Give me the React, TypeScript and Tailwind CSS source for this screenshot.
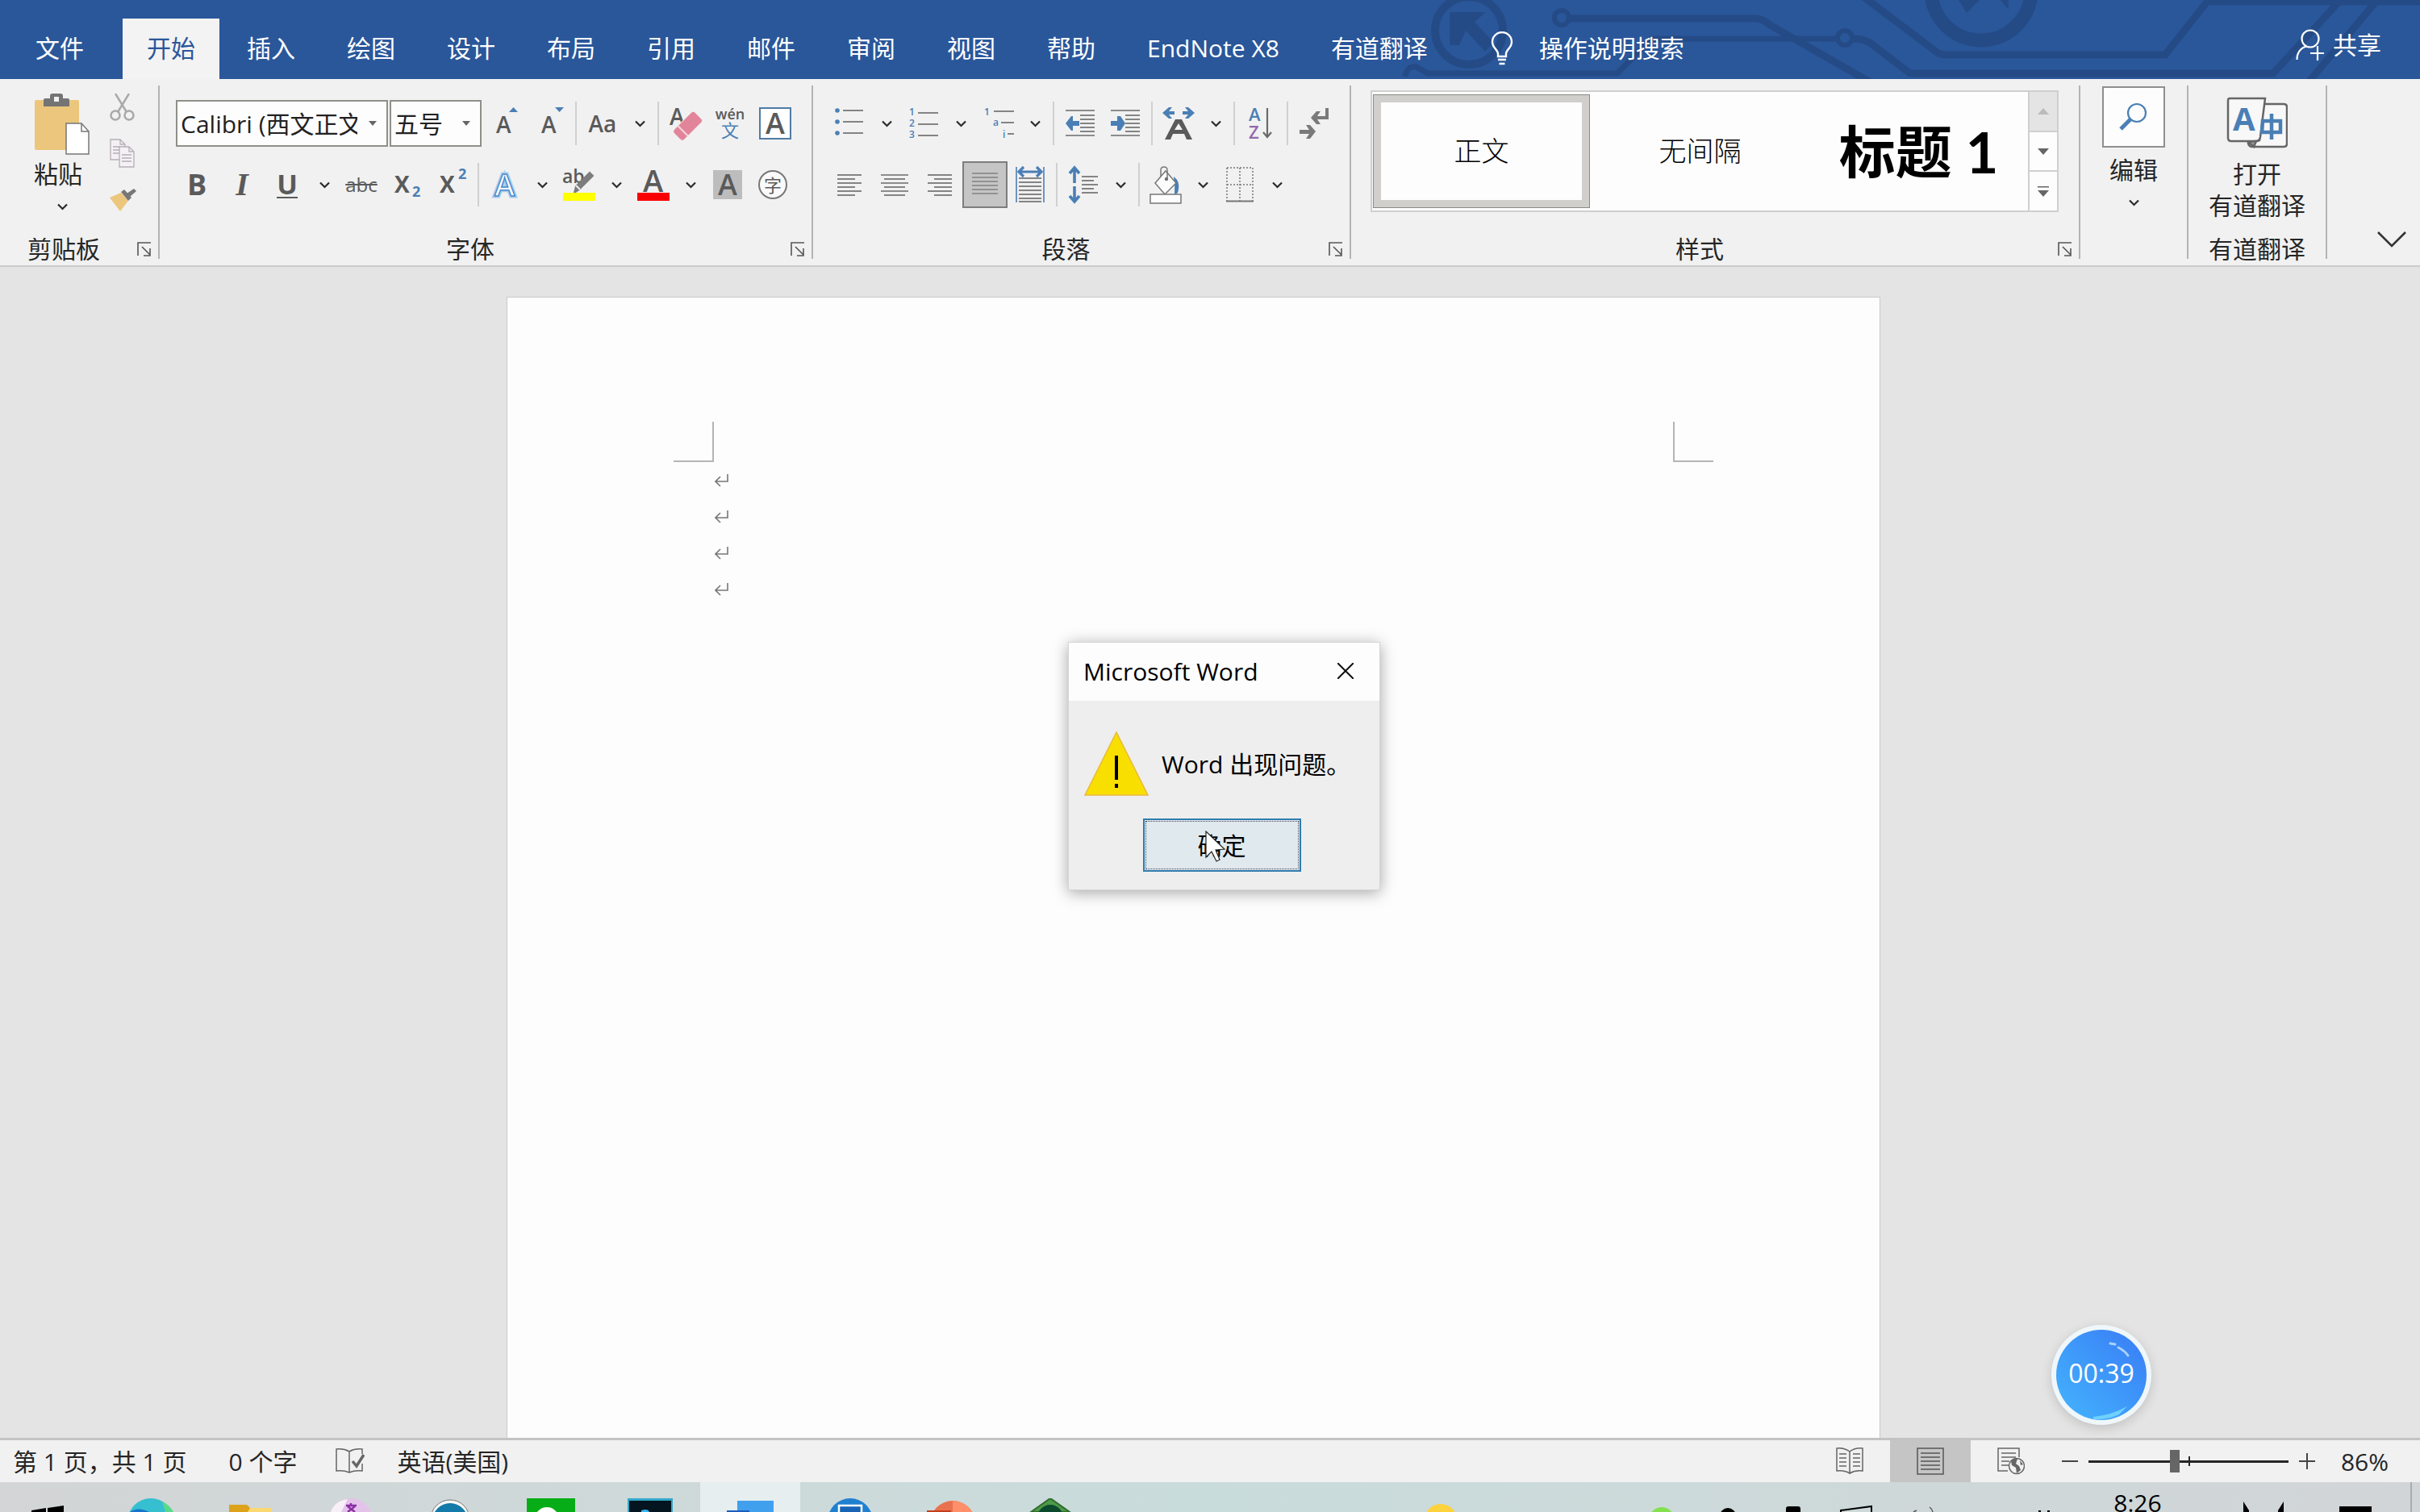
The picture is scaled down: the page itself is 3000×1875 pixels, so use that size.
import React from 'react';
import clsx from 'clsx';

const tabs = ['插入', '绘图', '设计', '布局', '引用', '邮件', '审阅', '视图', '帮助', 'EndNote X8', '有道翻译'];

/* ---------- small building blocks ---------- */

function Tool({ label, children, active }: { label: string; children: React.ReactNode; active?: boolean }) {
  return (
    <button
      aria-label={label}
      className={clsx(
        'flex h-[58px] w-14 shrink-0 items-center justify-center text-[#5a5a5a] [&_svg]:overflow-visible',
        active && 'border-2 border-[#7d7d7d] bg-[#c5c5c5]'
      )}
    >
      {children}
    </button>
  );
}

function Chevron() {
  return (
    <svg width="13" height="9" viewBox="0 0 13 9" fill="none" stroke="#2b2b2b" strokeWidth="2.2">
      <path d="M1 1.5 6.5 7 12 1.5" />
    </svg>
  );
}

function More({ label }: { label: string }) {
  return (
    <button aria-label={label} className="flex h-[58px] w-9 shrink-0 items-center justify-center">
      <Chevron />
    </button>
  );
}

function Sep() {
  return <div className="mx-1 h-[54px] w-0.5 shrink-0 bg-[#d0d0d0]" />;
}

function Launcher({ label }: { label: string }) {
  return (
    <button aria-label={label} className="mr-2 ml-3 shrink-0">
      <svg width="18" height="18" viewBox="0 0 18 18" fill="none" stroke="#555" strokeWidth="1.6">
        <path d="M1 17V1h16M6 6l10 10M16 8v9H8" />
      </svg>
    </button>
  );
}

function Group({ title, className, children, launcher = true }: { title?: string; className?: string; children: React.ReactNode; launcher?: boolean }) {
  return (
    <section className={clsx('flex flex-col justify-between border-r-2 border-[#b4b4b4]', className)}>
      {children}
      {title && (
        <div className="flex h-6 items-center">
          <h2 className="flex-1 text-center leading-6 whitespace-nowrap">{title}</h2>
          {launcher && <Launcher label={title} />}
        </div>
      )}
    </section>
  );
}

function Combo({ label, value, className }: { label: string; value: string; className: string }) {
  return (
    <div className={clsx('relative', className)}>
      <select
        aria-label={label}
        className="h-[58px] w-full appearance-none overflow-hidden border-2 border-[#8f8f8a] bg-[#fdfdfd] pr-9 pl-1 text-[#222]"
      >
        <option>{value}</option>
      </select>
      <svg className="pointer-events-none absolute top-[26px] right-3.5" width="10" height="6" viewBox="0 0 10 6">
        <path d="M0 0h10L5 6z" fill="#666" />
      </svg>
    </div>
  );
}

/* Horizontal text lines, each one [x1, x2, y] */
function Lines({ rows, stroke = '#6a6a6a' }: { rows: number[][]; stroke?: string }) {
  return (
    <>
      {rows.map(([a, b, y]) => (
        <path key={y} d={`M${a} ${y}H${b}`} stroke={stroke} strokeWidth="1.6" />
      ))}
    </>
  );
}

/* ---------- title bar ---------- */

function Circuit() {
  return (
    <svg className="absolute top-0 right-0" width="1300" height="98" viewBox="1700 0 1300 98" fill="none" stroke="#254b86" strokeWidth="9">
      <circle cx="1821" cy="38" r="42" strokeWidth="10" />
      <path d="M1797 15h45l-14 12 24 26-11 11-24-26-8 18h-12z" fill="#254b86" stroke="none" />
      <circle cx="1936" cy="22" r="9" strokeWidth="6" />
      <path d="M1946 23h230q10 0 18 8l130 74" />
      <path d="M1742 95q2-14 14-12l14 8h235l42-43h230" strokeWidth="7" />
      <circle cx="2287" cy="47" r="9" strokeWidth="6" />
      <path d="M2296 48q18 0 26 8l46 35h450l88-96" />
      <path d="M2310-4l90 68q4 4 14 4h270l52-66h270" />
      <path d="M2952-6l-92 110" />
      <circle cx="2456" cy="-12" r="62" strokeWidth="17" />
      <path d="M2424-6l14 22 22-22zM2474-6l16 18V-6z" fill="#254b86" stroke="none" />
    </svg>
  );
}

function TitleBar() {
  return (
    <header className="relative flex h-[98px] items-end bg-[#2a579a] text-white">
      <Circuit />
      <nav className="relative flex flex-1 items-end gap-1 whitespace-nowrap">
        <button className="h-[75px] px-11 pb-0.5">文件</button>
        <button className="h-[75px] bg-[#f3f3f3] px-[30px] pb-0.5 text-[#2a579a]">开始</button>
        {tabs.map((t) => (
          <button key={t} className="h-[75px] px-[30px] pb-0.5">
            {t}
          </button>
        ))}
        <button className="flex h-[75px] items-center gap-8 pb-0.5 pl-11">
          <svg width="28" height="42" viewBox="0 0 28 42" fill="none" stroke="#fff" strokeWidth="2.4">
            <path d="M9 31v-4C8 22 2 20 2 13a12 12 0 0 1 24 0c0 7-6 9-7 14v4zM9 35h10M10.500 40h7" />
          </svg>
          操作说明搜索
        </button>
      </nav>
      <button className="relative mr-12 flex h-[83px] items-center gap-2.5 pb-0.5">
        <svg width="36" height="40" viewBox="0 0 36 40" fill="none" stroke="#fff" strokeWidth="2.2">
          <circle cx="18" cy="12" r="10.500" />
          <path d="M1.500 38c0-9 5-15 12-16.500M18 30h17M27 21v18" />
        </svg>
        共享
      </button>
    </header>
  );
}

/* ---------- ribbon groups ---------- */

function Clipboard() {
  return (
    <Group title="剪贴板" className="w-[198px]">
      <div className="flex pt-2.5 pl-[42px]">
        <button className="flex w-[70px] flex-col items-center">
          <svg width="68" height="76" viewBox="0 0 68 76">
            <rect x="0" y="8" width="55" height="62" rx="2" fill="#ebc67c" />
            <path d="M11 16V8q0-2 2-2h6V3q0-3 3-3h10q3 0 3 3v3h6q2 0 2 2v8z" fill="#747474" />
            <rect x="24" y="4" width="6" height="6" fill="#f1f1f1" />
            <path d="M39 37h19l9 10v28H39z" fill="#fff" stroke="#777" strokeWidth="1.500" />
            <path d="M58 37v10h9" fill="none" stroke="#777" strokeWidth="1.500" />
          </svg>
          <span className="mt-2 mb-5 w-[70px] text-left leading-8">粘贴</span>
          <Chevron />
        </button>
        <div className="ml-6 flex flex-col gap-[22px]">
          <button aria-label="剪切">
            <svg width="31" height="34" viewBox="0 0 31 34" fill="none" stroke="#a9a9a9" strokeWidth="2.500">
              <path d="M7 0l14 23M24 0L10 23" />
              <circle cx="7" cy="27" r="5.500" />
              <circle cx="24" cy="27" r="5.500" />
            </svg>
          </button>
          <button aria-label="复制">
            <svg width="31" height="36" viewBox="0 0 31 36" fill="#f3f1f3" stroke="#b7aeb7" strokeWidth="1.300">
              <path d="M1 1h12l6 6v19H1zM13 1v6h6" />
              <path d="M4 10h9M4 14h9M4 18h9" />
              <path d="M12 10h12l6 6v19H12zM24 10v6h6M15 20h12M15 24h12M15 28h12" />
            </svg>
          </button>
          <button aria-label="格式刷" className="mt-1">
            <svg width="33" height="28" viewBox="0 0 33 28">
              <path d="M0 11l14-6 9 10-10 13z" fill="#ebc67c" />
              <path d="M14 4l4-3 9 10-4 4z" fill="#777" />
              <path d="M21 6l9-6 3 3-8 7z" fill="#777" />
            </svg>
          </button>
        </div>
      </div>
    </Group>
  );
}

function FontGroup() {
  return (
    <Group title="字体" className="w-[810px]">
      <div className="flex flex-col gap-[18px] pt-[18px] pl-[18px]">
        <div className="flex items-center">
          <Combo label="字体" value="Calibri (西文正文)" className="mx-0.5 w-[263px]" />
          <Combo label="字号" value="五号" className="w-[114px]" />
          <Tool label="增大字号">
            <svg width="36" height="40" viewBox="-5 0 36 40" fill="#5a5a5a">
              <text x="3" y="32" className="font-['Open_Sans'] text-[28px] font-semibold">A</text>
              <path d="M19 6h11l-5.500-6z" fill="#4a7fb5" />
            </svg>
          </Tool>
          <Tool label="减小字号">
            <svg width="36" height="40" viewBox="-5 0 36 40" fill="#5a5a5a">
              <text x="3" y="32" className="font-['Open_Sans'] text-[28px] font-semibold">A</text>
              <path d="M20 0h11l-5.500 6z" fill="#4a7fb5" />
            </svg>
          </Tool>
          <Sep />
          <Tool label="更改大小写">
            <span className="text-[28px] font-semibold">Aa</span>
          </Tool>
          <More label="大小写选项" />
          <Sep />
          <Tool label="清除格式">
            <svg width="40" height="42" viewBox="0 0 40 42" fill="#5a5a5a">
              <text x="1" y="23" className="font-['Open_Sans'] text-[28px] font-semibold">A</text>
              <g transform="translate(24 24) rotate(-45)">
                <rect x="-19" y="-9" width="37" height="18" rx="4" fill="#e2859a" stroke="#f1f1f1" />
                <path d="M-9-9V9" stroke="#f6d5dc" strokeWidth="2" />
              </g>
            </svg>
          </Tool>
          <Tool label="拼音指南">
            <span className="flex flex-col items-center leading-none">
              <span className="text-lg leading-4 font-semibold">wén</span>
              <span className="text-[22px] leading-6 text-[#4a7fb5]">文</span>
            </span>
          </Tool>
          <Tool label="字符边框">
            <span className="flex size-10 items-center justify-center border-2 border-[#4f7ba5] bg-white text-4xl leading-none font-semibold">A</span>
          </Tool>
        </div>
        <div className="flex items-center">
          <Tool label="加粗">
            <span className="text-[36px] font-bold">B</span>
          </Tool>
          <Tool label="倾斜">
            <span className="font-['Liberation_Serif'] text-[40px] font-bold italic">I</span>
          </Tool>
          <Tool label="下划线">
            <span className="border-b-2 border-[#5a5a5a] text-[34px] leading-8 font-bold">U</span>
          </Tool>
          <More label="下划线选项" />
          <Tool label="删除线">
            <span className="text-[24px] line-through">abc</span>
          </Tool>
          <Tool label="下标">
            <svg width="30" height="40" viewBox="0 0 30 40" className="font-['Open_Sans'] font-bold">
              <text x="0" y="30" fill="#5a5a5a" className="text-[28px]">X</text>
              <text x="22" y="35" fill="#4a7fb5" className="text-[18px]">2</text>
            </svg>
          </Tool>
          <Tool label="上标">
            <svg width="30" height="40" viewBox="0 0 30 40" className="font-['Open_Sans'] font-bold">
              <text x="0" y="30" fill="#5a5a5a" className="text-[28px]">X</text>
              <text x="23" y="13" fill="#4a7fb5" className="text-[18px]">2</text>
            </svg>
          </Tool>
          <Sep />
          <Tool label="文本效果">
            <svg width="40" height="44" viewBox="0 0 40 44">
              <text x="7" y="36" fill="#fff" stroke="#a9cdf0" strokeWidth="5" className="font-['Open_Sans'] text-[38px] font-semibold">A</text>
              <text x="7" y="36" fill="#fff" stroke="#4a8bcb" strokeWidth="1.500" className="font-['Open_Sans'] text-[38px] font-semibold">A</text>
            </svg>
          </Tool>
          <More label="文本效果选项" />
          <Tool label="突出显示">
            <svg width="42" height="40" viewBox="0 0 42 40">
              <text x="0" y="18" fill="#5a5a5a" className="font-['Open_Sans'] text-[23px] font-semibold">ab</text>
              <path d="M34 5l4 4-17 17-6 4 2-8z" fill="#7d7d7d" stroke="#7d7d7d" strokeWidth="2" />
              <path d="M17 21l5 5" stroke="#f1f1f1" strokeWidth="2" />
              <path d="M1 30h40v10H1z" fill="#ff0" />
            </svg>
          </Tool>
          <More label="突出显示选项" />
          <Tool label="字体颜色">
            <svg width="40" height="40" viewBox="0 0 40 40">
              <text x="7" y="29" fill="#5a5a5a" className="font-['Open_Sans'] text-[38px] font-semibold">A</text>
              <path d="M0 30h40v10H0z" fill="#fb0000" />
            </svg>
          </Tool>
          <More label="字体颜色选项" />
          <Tool label="字符底纹">
            <span className="flex size-9 items-center justify-center bg-[#bdbdbd] text-4xl leading-none font-semibold">A</span>
          </Tool>
          <Tool label="带圈字符">
            <span className="flex size-9 items-center justify-center rounded-full border-2 border-[#777] bg-[#fafafa] text-[22px] leading-none">字</span>
          </Tool>
        </div>
      </div>
    </Group>
  );
}

function Indent({ flip }: { flip?: boolean }) {
  return (
    <svg width="38" height="34" viewBox="0 0 38 34">
      <Lines rows={[[1, 37, 1], [19, 37, 7], [19, 37, 12], [19, 37, 17], [19, 37, 22], [19, 37, 27], [1, 37, 32]]} />
      {flip ? (
        <path d="M1 14h8V8h4l6 9-6 9H9v-6H1z" fill="#4a7fb5" />
      ) : (
        <path d="M18 14h-8V8H8l-7 9 7 9h2v-6h8z" fill="#4a7fb5" />
      )}
    </svg>
  );
}

function ParagraphGroup() {
  return (
    <Group title="段落" className="w-[667px]">
      <div className="flex flex-col gap-[18px] pt-[18px] pl-[17px]">
        <div className="flex items-center">
          <Tool label="项目符号">
            <svg width="36" height="38" viewBox="0 0 36 38" fill="#4a7fb5">
              <circle cx="3" cy="3" r="2.800" />
              <circle cx="3" cy="17" r="2.800" />
              <circle cx="3" cy="31" r="2.800" />
              <Lines rows={[[10, 35, 3], [10, 35, 17], [10, 35, 31]]} />
            </svg>
          </Tool>
          <More label="项目符号选项" />
          <Tool label="编号">
            <svg width="36" height="38" viewBox="0 0 36 38" fill="#4a7fb5" className="font-['Open_Sans'] text-[12px] font-semibold">
              <text x="0" y="9">1</text>
              <text x="0" y="23">2</text>
              <text x="0" y="37">3</text>
              <Lines rows={[[11, 36, 6], [11, 36, 20], [11, 36, 34]]} />
            </svg>
          </Tool>
          <More label="编号选项" />
          <Tool label="多级列表">
            <svg width="34" height="38" viewBox="0 0 34 38" fill="#4a7fb5" className="font-['Open_Sans'] text-[12px] font-semibold">
              <text x="0" y="9">1</text>
              <text x="11" y="22">a</text>
              <text x="23" y="37">i</text>
              <Lines rows={[[12, 37, 4], [21, 37, 18], [29, 37, 32]]} />
            </svg>
          </Tool>
          <More label="多级列表选项" />
          <Sep />
          <Tool label="减少缩进量">
            <Indent />
          </Tool>
          <Tool label="增加缩进量">
            <Indent flip />
          </Tool>
          <Sep />
          <Tool label="中文版式">
            <svg width="40" height="40" viewBox="0 0 40 40" fill="#4a7fb5">
              <path d="M0 7l8-7h4L8 5h7v4H8l4 5H8zM40 7l-8-7h-4l4 5h-7v4h7l-4 5h4z" />
              <path d="M16 15h8l13 25h-7l-3-7H13l-3 7H3zM20 20l-5 8h10z" fill="#5a5a5a" />
            </svg>
          </Tool>
          <More label="中文版式选项" />
          <Sep />
          <Tool label="排序">
            <svg width="30" height="46" viewBox="0 0 30 46" className="font-['Open_Sans'] text-[22px] font-semibold">
              <text x="0" y="20" fill="#4a7fb5">A</text>
              <text x="0" y="42" fill="#9467ad">Z</text>
              <path d="M23 4v36M18 34l5 6 5-6" fill="none" stroke="#6a6a6a" strokeWidth="2.200" />
            </svg>
          </Tool>
          <Sep />
          <Tool label="显示编辑标记">
            <svg width="36" height="38" viewBox="0 0 36 38" fill="#7a7a7a">
              <path d="M36 0v14H22l4 6h-5l-7-8 7-8h5l-4 6h10V0zM0 27h12l-4-6h5l7 8-7 9H8l4-6H0z" />
            </svg>
          </Tool>
        </div>
        <div className="flex items-center">
          <Tool label="左对齐">
            <svg width="30" height="38" viewBox="0 0 30 38">
              <Lines rows={[[0, 30, 7], [0, 22, 12], [0, 30, 17], [0, 22, 22], [0, 30, 27], [0, 22, 32]]} />
            </svg>
          </Tool>
          <Tool label="居中">
            <svg width="34" height="38" viewBox="0 0 34 38">
              <Lines rows={[[0, 34, 7], [4, 30, 12], [0, 34, 17], [4, 30, 22], [0, 34, 27], [4, 30, 32]]} />
            </svg>
          </Tool>
          <Tool label="右对齐">
            <svg width="30" height="38" viewBox="0 0 30 38">
              <Lines rows={[[0, 30, 7], [8, 30, 12], [0, 30, 17], [8, 30, 22], [0, 30, 27], [8, 30, 32]]} />
            </svg>
          </Tool>
          <Tool label="两端对齐" active>
            <svg width="32" height="38" viewBox="0 0 32 38">
              <Lines stroke="#858585" rows={[[0, 32, 5], [0, 32, 10], [0, 32, 15], [0, 32, 20], [0, 32, 25], [0, 32, 30]]} />
            </svg>
          </Tool>
          <Tool label="分散对齐">
            <svg width="36" height="46" viewBox="0 0 36 46">
              <path d="M1 1v44M35 1v44" stroke="#4a7fb5" strokeWidth="1.600" />
              <path d="M4 7h28M10 1L4 7l6 6M26 1l6 6-6 6" fill="none" stroke="#4a7fb5" strokeWidth="3.200" />
              <Lines rows={[[4, 32, 15], [4, 32, 20], [4, 32, 25], [4, 32, 30], [4, 32, 35], [4, 32, 40], [4, 32, 44]]} />
            </svg>
          </Tool>
          <Sep />
          <Tool label="行和段落间距">
            <svg width="36" height="46" viewBox="0 0 36 46">
              <path d="M7 3v18M1 9l6-7 6 7M7 25v18M1 37l6 7 6-7" fill="none" stroke="#4a7fb5" strokeWidth="3.600" />
              <Lines rows={[[16, 36, 13], [16, 31, 18], [16, 36, 23], [16, 31, 28], [16, 36, 33]]} />
            </svg>
          </Tool>
          <More label="行距选项" />
          <Sep />
          <Tool label="底纹">
            <svg width="40" height="48" viewBox="0 0 40 48" fill="#fcfcfc" stroke="#777" strokeWidth="1.500">
              <path d="M30 14q9 6 5 20l-4 3q1-12-1-23z" fill="#4a7fb5" stroke="none" />
              <path d="M20 7l13 15-14 14L7 22z" />
              <path d="M14 14V6q0-4 4-4t4 4v10" fill="none" />
              <circle cx="21" cy="17" r="1.500" fill="#555" />
              <path d="M1 36h38v11H1z" />
            </svg>
          </Tool>
          <More label="底纹选项" />
          <Tool label="边框">
            <svg width="34" height="44" viewBox="0 0 34 44" fill="none" stroke="#777" strokeWidth="1.500">
              <path d="M1 1h32v41M1 1v41M17 1v41M1 22h32" strokeDasharray="2 2" />
              <path d="M0 42.500h34" strokeWidth="2" />
            </svg>
          </Tool>
          <More label="边框选项" />
        </div>
      </div>
    </Group>
  );
}

function StylesGroup() {
  return (
    <Group title="样式" className="min-w-0 flex-1">
      <div className="mt-1.5 mr-[25px] ml-6 flex h-[151px] border-2 border-[#cfcfcf] bg-[#fdfdfd] text-black">
        <div className="grid min-w-0 flex-1 grid-cols-3 items-center whitespace-nowrap">
          <button className="m-px h-[141px] border border-[#8a8a86] bg-[#d0cfcb] p-[9px]">
            <span className="flex h-full items-center justify-center bg-[#fdfdfd] text-[34px] font-light">正文</span>
          </button>
          <button className="h-full text-[34px] font-light">无间隔</button>
          <button className="h-full font-['Lato','Noto_Sans_CJK_SC',sans-serif] text-[70px] leading-none font-bold">标题 1</button>
        </div>
        <div className="flex w-9 flex-col divide-y-2 divide-[#cfcfcf] border-l-2 border-[#cfcfcf]">
          <button aria-label="上一行" className="flex flex-1 items-center justify-center bg-[#e4e4e4]">
            <svg width="14" height="8" viewBox="0 0 14 8"><path d="M0 8h14L7 0z" fill="#bbb" /></svg>
          </button>
          <button aria-label="下一行" className="flex flex-1 items-center justify-center">
            <svg width="14" height="8" viewBox="0 0 14 8"><path d="M0 0h14L7 8z" fill="#666" /></svg>
          </button>
          <button aria-label="其他样式" className="flex flex-1 items-center justify-center">
            <svg width="14" height="13" viewBox="0 0 14 13"><path d="M0 0h14v1.500H0zM0 5h14L7 13z" fill="#666" /></svg>
          </button>
        </div>
      </div>
    </Group>
  );
}

function Ribbon() {
  return (
    <div className="flex h-[233px] border-b-2 border-[#cbcbcb] bg-[#f1f1f1] pt-2 pb-2 text-[#262626]">
      <Clipboard />
      <FontGroup />
      <ParagraphGroup />
      <StylesGroup />
      <Group className="w-[134px]">
        <button className="flex flex-col items-center">
          <span className="mt-px flex h-[76px] w-[78px] items-center justify-center border-2 border-[#8f8f8f] bg-[#fdfdfd]">
            <svg width="36" height="36" viewBox="0 0 36 36" fill="none" stroke="#4a7fb5">
              <circle cx="22" cy="13" r="11" strokeWidth="2.200" />
              <path d="M14 21L2 33" strokeWidth="5" />
            </svg>
          </span>
          <span className="mt-3 mb-5 leading-8">编辑</span>
          <Chevron />
        </button>
      </Group>
      <Group title="有道翻译" className="w-[172px]" launcher={false}>
        <button className="flex flex-col items-center pt-3.5 leading-[39px]">
          <svg width="76" height="64" viewBox="0 0 76 64" fill="#f8f8f8" stroke="#666" strokeWidth="2.500">
            <path d="M44 9h27q4 0 4 4v45q0 4-4 4H32q-4 0-5-4l14-4z" />
            <path d="M4 2h44L42 50q-1 5-5 5H6q-4 0-4-4V5q0-3 2-3z" />
            <path d="M27 56l10-1-3 7z" fill="#999" />
            <text x="8" y="42" fill="#4a7fb5" stroke="none" className="font-['Open_Sans'] text-[40px] font-bold">A</text>
            <path d="M45 30h22v14H44zM56 21v32" fill="none" stroke="#4a7fb5" strokeWidth="4.500" />
          </svg>
          <span className="mt-3">打开</span>
          <span>有道翻译</span>
        </button>
      </Group>
      <button aria-label="折叠功能区" className="flex w-[115px] items-end justify-center pb-3.5 pl-11">
        <svg width="36" height="20" viewBox="0 0 36 20" fill="none" stroke="#333" strokeWidth="2.600">
          <path d="M1 1l17 17L35 1" />
        </svg>
      </button>
    </div>
  );
}

/* ---------- document ---------- */

function Return() {
  return (
    <p className="flex h-[45px] items-center pl-[51px]">
      <svg width="17" height="16" viewBox="0 0 17 16" fill="none" stroke="#777" strokeWidth="1.600">
        <path d="M16 0v9H1M7 3L1 9l6 6" />
      </svg>
    </p>
  );
}

function Document() {
  return (
    <main className="flex min-h-0 flex-1 justify-center bg-[#e4e4e4] pt-[37px] pr-[42px]">
      <article className="w-[1703px] border border-b-0 border-[#c9c9c9] bg-[#fdfdfd] px-[206px] pt-[154px]">
        <div className="flex justify-between">
          <div className="size-[50px] border-r-2 border-b-2 border-[#b5b5b5]" />
          <div className="size-[50px] border-b-2 border-l-2 border-[#b5b5b5]" />
        </div>
        <Return />
        <Return />
        <Return />
        <Return />
      </article>
    </main>
  );
}

function Dialog() {
  return (
    <div
      role="alertdialog"
      aria-labelledby="dialog-title"
      className="absolute top-[796px] left-[1324px] w-[387px] border border-[#d5d5d5] bg-[#eee] pb-[22px] text-black shadow-[0_3px_18px_rgba(0,0,0,0.35)]"
    >
      <div className="flex h-[72px] items-center justify-between bg-[#fdfdfd] pr-8 pb-0.5 pl-[18px]">
        <h1 id="dialog-title">Microsoft Word</h1>
        <button aria-label="关闭">
          <svg width="20" height="20" viewBox="0 0 20 20" stroke="#111" strokeWidth="2"><path d="M0 0l20 20M20 0L0 20" /></svg>
        </button>
      </div>
      <div className="flex items-center gap-4 pt-[38px] pl-[19px]">
        <svg width="80" height="80" viewBox="0 0 80 80" className="shrink-0">
          <path d="M40 1l39 78H1z" fill="#f9df00" stroke="#e8b93e" strokeWidth="1.500" />
          <path d="M38 30h4v30h-4zM38 65h4v5h-4z" fill="#000" />
        </svg>
        <p className="whitespace-nowrap">Word 出现问题。</p>
      </div>
      <div className="mt-7 flex justify-center pr-1.5">
        <button className="h-[66px] w-[196px] border-2 border-[#2f7cac] bg-[#e0e9ee] p-px">
          <span className="relative flex h-full items-center justify-center border border-dotted border-[#445]">
            确定
            <svg className="absolute top-[11px] left-[73px]" width="26" height="39" viewBox="0 0 26 39">
              <path d="M1 1v32l7-7 6 12 4-2-5-12 11-1z" fill="#fff" stroke="#222" strokeWidth="1.200" />
            </svg>
          </span>
        </button>
      </div>
    </div>
  );
}

function Timer() {
  return (
    <div className="absolute right-[333px] bottom-[108px] flex size-[124px] items-center justify-center rounded-full bg-[#eff7fb] shadow-[0_4px_14px_rgba(0,0,0,0.15)]">
      <div className="relative flex size-28 items-center justify-center overflow-hidden rounded-full bg-linear-to-tr from-[#45b4fd] to-[#3a7bf5] pb-1 text-[32px] text-white">
        <svg className="absolute inset-0" width="112" height="112" viewBox="0 0 112 112" fill="none" stroke="#a9d2ff" strokeLinecap="round">
          <path d="M67 17l6 1M77 22q8 4 12 10" strokeWidth="3" />
          <path d="M46 108q22-2 42-13l-10 10q-14 7-32 6z" fill="#6fd0fb" stroke="none" />
        </svg>
        00:39
      </div>
    </div>
  );
}

/* ---------- status bar ---------- */

function StatusBar() {
  return (
    <footer className="flex h-[55px] items-center border-t-3 border-[#c3c3c3] bg-[#f1f1f1] pl-4 whitespace-nowrap text-[#262626]">
      <span>第 1 页，共 1 页</span>
      <span className="ml-13">0 个字</span>
      <svg className="mr-10 ml-12" width="36" height="32" viewBox="0 0 36 32" fill="none" stroke="#666" strokeWidth="1.500">
        <path d="M17 4Q10 0 1 1v27q9-1 16 2 7-3 16-2v-9M17 4v26M17 4q7-4 16-3v6" />
        <path d="M21 16l5 6 9-14" strokeWidth="3.500" />
      </svg>
      <span>英语(美国)</span>
      <div className="ml-auto flex h-full items-center">
        <button aria-label="阅读视图" className="flex h-full w-[100px] items-center justify-center">
          <svg width="34" height="34" viewBox="0 0 34 34" fill="none" stroke="#666" strokeWidth="1.500">
            <path d="M17 5Q10 0 1 1v28q9-1 16 3 7-4 16-3V1q-9-1-16 4zM17 5v28" />
            <path d="M4 8h9M4 13h9M4 18h9M4 23h9M21 8h9M21 13h9M21 18h9M21 23h9" />
          </svg>
        </button>
        <button aria-label="页面视图" className="flex h-full w-[100px] items-center justify-center bg-[#c5c5c5]">
          <svg width="34" height="34" viewBox="0 0 34 34" fill="none" stroke="#555" strokeWidth="1.500">
            <path d="M1 1h32v32H1zM5 7h24M5 12h24M5 17h24M5 22h24M5 27h24" />
          </svg>
        </button>
        <button aria-label="Web 版式视图" className="flex h-full w-[100px] items-center justify-center">
          <svg width="34" height="34" viewBox="0 0 34 34" fill="none" stroke="#666" strokeWidth="1.500">
            <path d="M27 12V1H1v28h12M5 7h18M5 12h18M5 17h10M5 22h9" />
            <circle cx="24" cy="23" r="9.500" fill="#f1f1f1" />
            <path d="M17 17q4-4 8-3l-2 6 4 3 2 5-5 4-1-7-5-3zM28 16l4 5-3 1z" fill="#666" stroke="none" />
          </svg>
        </button>
        <button aria-label="缩小" className="ml-2 flex w-[30px] justify-center">
          <svg width="20" height="20" viewBox="0 0 20 20" stroke="#444" strokeWidth="2"><path d="M0 10h20" /></svg>
        </button>
        <div className="relative mx-2 flex items-center">
          <div className="absolute left-1/2 h-3 w-0.5 bg-[#262626]" />
          <input
            type="range"
            aria-label="显示比例"
            min={0}
            max={100}
            defaultValue={43}
            className="h-7 w-[248px] appearance-none bg-transparent [&::-webkit-slider-runnable-track]:h-[3px] [&::-webkit-slider-runnable-track]:bg-[#262626] [&::-webkit-slider-thumb]:-mt-[13px] [&::-webkit-slider-thumb]:h-7 [&::-webkit-slider-thumb]:w-3 [&::-webkit-slider-thumb]:appearance-none [&::-webkit-slider-thumb]:bg-[#666]"
          />
        </div>
        <button aria-label="放大" className="flex w-[30px] justify-center">
          <svg width="20" height="20" viewBox="0 0 20 20" stroke="#444" strokeWidth="2"><path d="M0 10h20M10 0v20" /></svg>
        </button>
        <button className="w-[125px] pr-3 text-center">86%</button>
      </div>
    </footer>
  );
}

/* ---------- taskbar, its lower part lies below the screen edge ---------- */

const apps: { name: string; active?: boolean; art: React.ReactNode }[] = [
  { name: '开始', art: <path d="M8 15l18-3v5H8zM28 12l20-3v8H28z" fill="#000" /> },
  {
    name: 'Edge',
    art: (
      <>
        <circle cx="32" cy="29" r="29" fill="#35bfd0" />
        <path d="M46 4a29 29 0 0 1 14 13H50z" fill="#58d98b" />
        <path d="M6 17q10-7 24 0z" fill="#1673c9" />
      </>
    ),
  },
  { name: '文件资源管理器', art: (<><path d="M5 8h22l4 4v5H5z" fill="#dda21a" /><path d="M31 12h27v5H28z" fill="#fbd873" /></>) },
  {
    name: '翻译',
    art: (
      <>
        <circle cx="32" cy="27" r="27" fill="#e3c3ea" />
        <path d="M7 17Q12 3 28 1L20 17z" fill="#f8f0f9" />
        <path d="M26 9h13M32 6v4M28 10l9 7M37 10l-9 7" stroke="#8b2fa4" strokeWidth="2.400" fill="none" />
      </>
    ),
  },
  { name: '浏览器', art: (<><circle cx="31" cy="26" r="24" fill="#f7f7f7" stroke="#777" /><circle cx="31" cy="28" r="22" fill="#137aa9" /></>) },
  { name: '微信', art: (<><path d="M2 0h60v17H2z" fill="#06ad16" /><circle cx="27" cy="26" r="15" fill="#fff" /></>) },
  { name: 'Photoshop', art: (<><path d="M3 0h56v17H3z" fill="#31a8c9" /><path d="M5 3h52v14H5z" fill="#04151f" /><path d="M20 17v-2q8-3 10 2z" fill="#36b5f5" /></>) },
  { name: 'Word', active: true, art: (<><path d="M15 3h45v14H15z" fill="#41a0ee" /><path d="M2 15h28v2H2z" fill="#1b5dbe" /></>) },
  { name: '平板', art: (<><circle cx="31" cy="28" r="28" fill="#1f80d0" /><path d="M17 17V9h28v8" fill="#1763b5" stroke="#fff" strokeWidth="2.500" /></>) },
  { name: 'PowerPoint', art: (<><circle cx="34" cy="31" r="28" fill="#ea7150" /><path d="M34 3a28 28 0 0 1 24 14H34z" fill="#ff9069" /><path d="M2 15h30v2H2z" fill="#c43e1c" /></>) },
  { name: 'Evernote', art: (<><path d="M7 17L31 0l24 17z" fill="#4d9a48" stroke="#2f6b2c" strokeWidth="2" /><circle cx="31" cy="24" r="16" fill="#0b4a2c" /></>) },
];

function Taskbar() {
  return (
    <div className="flex h-[37px] items-end overflow-hidden bg-linear-to-r from-[#d3d5d6] via-[#c9dcdc] to-[#d2d5d7]">
      {apps.map((a) => (
        <button key={a.name} aria-label={a.name} className={clsx('flex h-full w-[124px] shrink-0 items-end justify-center', a.active && 'bg-[#e6eef0]')}>
          <svg width="62" height="17" viewBox="0 0 62 17">{a.art}</svg>
        </button>
      ))}
      <div className="ml-auto flex h-full items-end">
        <button aria-label="天气" className="w-[254px]">
          <svg width="60" height="17" viewBox="0 0 60 17"><circle cx="20" cy="27" r="20" fill="#fdd23c" /></svg>
        </button>
        <button aria-label="后台应用" className="flex w-20 justify-center">
          <svg width="32" height="17" viewBox="0 0 32 17"><circle cx="16" cy="27" r="16" fill="#84e04f" /></svg>
        </button>
        <button aria-label="账户" className="flex w-20 justify-center">
          <svg width="32" height="17" viewBox="0 0 32 17"><circle cx="18" cy="22" r="10" /></svg>
        </button>
        <button aria-label="电源" className="flex w-20 justify-center">
          <svg width="32" height="17" viewBox="0 0 32 17"><rect x="10" y="10" width="18" height="12" rx="3" /></svg>
        </button>
        <button aria-label="网络" className="flex w-20 justify-center">
          <svg width="44" height="17" viewBox="0 0 44 17" fill="none" stroke="#000" strokeWidth="2"><path d="M4 20v-5l38-5v10" /></svg>
        </button>
        <button aria-label="音量" className="flex w-20 justify-center">
          <svg width="44" height="17" viewBox="0 0 44 17" fill="none" stroke="#555" strokeWidth="1.500"><path d="M14 17l4-2M34 11q3 2 4 6" /></svg>
        </button>
        <button aria-label="输入法" className="flex w-40 justify-end pr-8">
          <svg width="30" height="17" viewBox="0 0 30 17"><path d="M9 15h3v2H9zM20 15h3v2h-3z" /></svg>
        </button>
        <button className="flex h-full w-[140px] items-end justify-center leading-[22px]">8:26</button>
        <button aria-label="助手" className="flex w-[140px] justify-center pl-8">
          <svg width="54" height="17" viewBox="0 0 54 17"><path d="M2 4l7 11v2H2zM52 4l-7 11v2h7z" /></svg>
        </button>
        <button aria-label="通知" className="flex w-[120px] justify-center">
          <svg width="40" height="17" viewBox="0 0 40 17"><path d="M0 10h40v7H0z" /></svg>
        </button>
        <div className="ml-2 h-full w-3 border-l-2 border-[#a9adae]" />
      </div>
    </div>
  );
}

export default function App() {
  return (
    <div className="relative flex h-screen flex-col overflow-hidden bg-[#e4e4e4] font-['Open_Sans','Noto_Sans_CJK_SC',sans-serif] text-[30px]">
      <TitleBar />
      <Ribbon />
      <Document />
      <Dialog />
      <Timer />
      <StatusBar />
      <Taskbar />
    </div>
  );
}
